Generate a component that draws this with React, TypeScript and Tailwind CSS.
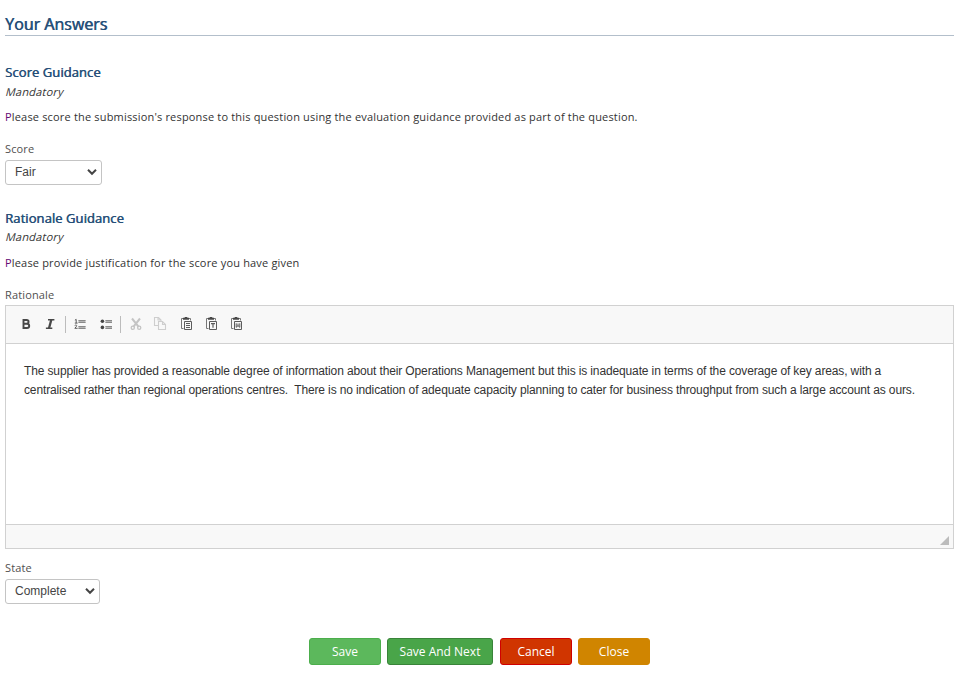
import React from "react";

const label = "text-[11px] leading-[15px] tracking-[0.15px] text-[#505050]";

function Section({ title, text, offset }: { title: string; text: string; offset: string }) {
  return (
    <section>
      <h3 className="text-[13px] leading-[18px] font-normal tracking-[0.07px] text-[#264f78] [text-shadow:0.5px_0_0_#264f78]">{title}</h3>
      <p className={`${offset} h-[18px] pl-px text-[11px] leading-[18px] tracking-[0.2px] text-[#333]`}>
        <span className="inline-block -skew-x-[14deg]">Mandatory</span>
      </p>
      <p className="text-[11px] leading-[16px] tracking-[0.177px] text-[#333]">
        <span className="text-[#650a75]">{text[0]}</span>{text.slice(1)}
      </p>
    </section>
  );
}

function Select({ value, width }: { value: string; width: string }) {
  return (
    <div className={`${width} flex h-[25px] items-center justify-between rounded-[3px] border border-[#c4c4c4] bg-white pl-[9px] pr-[4px] font-['Liberation_Sans',sans-serif] text-[12px] text-[#444]`}>
      <span className="-mt-[2px]">{value}</span>
      <svg className="-mt-px" width="10" height="8" viewBox="0 0 10 8" fill="none" stroke="#444" strokeWidth="2"><path d="M1 1.8 5 5.8 9 1.8" /></svg>
    </div>
  );
}

function Icon({ className = "", children }: { className?: string; children: React.ReactNode }) {
  return <svg className={`shrink-0 ${className}`} width="16" height="16" viewBox="0 0 16 16" fill="none" stroke="#5c5c5c">{children}</svg>;
}

function Clipboard({ children }: { children: React.ReactNode }) {
  return (
    <Icon className="ml-[9px]">
      <path d="M5 2.5H3.5v10H5.5M11 2.5h1.5V4.5" stroke="#777" />
      <path d="M5 1.8h1.7V.9h2.6v.9H11v2H5z" fill="#484848" stroke="none" />
      <path d="M6.5 5.5h7v8h-7z" fill="#f8f8f8" />
      {children}
    </Icon>
  );
}

function Toolbar() {
  return (
    <div className="flex h-[38px] items-center border-b border-[#d1d1d1] bg-[#f8f8f8] pb-px pl-[12px]">
      <Icon>
        <path d="M5.5 3v10M5 4h3.6c2.6 0 2.6 3.7 0 3.7H5M5 7.8h3.9c3.1 0 3.1 4.2 0 4.2H5" stroke="#484848" strokeWidth="1.9" />
      </Icon>
      <Icon className="ml-[8px]">
        <path d="M6 3.7h6.4M3.9 12.2h6.4" stroke="#484848" strokeWidth="1.5" />
        <path d="M9.3 3.7 7 12.2" stroke="#484848" strokeWidth="2.3" />
      </Icon>
      <i className="ml-[7px] h-[17px] w-px bg-[#bcbcbc]" />
      <Icon className="ml-[6px]">
        <path d="M2.9 4.2 4.2 3.4v3.7M2.8 7.1h2.8M2.7 9.5c1.6-1 2.7 0 1.6 1.1L2.8 12.3h2.8" strokeWidth="1" />
        <path d="M6.5 4h7v3h-7zM6.5 10h7v3h-7z" fill="#b5b5b5" stroke="none" />
        <path d="M6.5 4.5h7M6.5 6.5h7M6.5 10.5h7M6.5 12.5h7" stroke="#8a8a8a" strokeWidth="1" />
      </Icon>
      <Icon className="ml-[10px]">
        <circle cx="4.4" cy="5.3" r="1.8" fill="#444" stroke="none" />
        <circle cx="4.4" cy="11.4" r="1.8" fill="#444" stroke="none" />
        <path d="M7.5 4H14v3H7.5zM7.5 10H14v3H7.5z" fill="#b5b5b5" stroke="none" />
        <path d="M7.5 4.5H14M7.5 6.5H14M7.5 10.5H14M7.5 12.5H14" stroke="#8a8a8a" strokeWidth="1" />
      </Icon>
      <i className="ml-[6px] h-[17px] w-px bg-[#bcbcbc]" />
      <Icon className="ml-[7px]">
        <g stroke="#c4c4c4">
          <path d="m4 2.5 6.7 8.3M12 2.5 5.3 10.8" strokeWidth="2" />
          <circle cx="4.8" cy="11.8" r="1.6" strokeWidth="1.3" />
          <circle cx="11.2" cy="11.8" r="1.6" strokeWidth="1.3" />
        </g>
      </Icon>
      <Icon className="ml-[8px]">
        <g stroke="#cecece" strokeWidth="1.1">
          <path d="M6 9.5H2.5v-8h4l2.5 2.5v1M6 1.5V4h3" />
          <path d="M6.5 5.5h4l3 3v5h-7zM10.5 5.5v3h3" fill="#f8f8f8" />
        </g>
      </Icon>
      <span className="w-px" />
      <Clipboard><path d="M8 7.5h4M8 9.5h4M8 11.5h4" /></Clipboard>
      <Clipboard><path d="M8 7.6h4M10 7.6v4.2" strokeWidth="1.2" /></Clipboard>
      <Clipboard><path d="M8.2 7.3v4L10 9.7l1.8 1.6v-4M10 7.5v2.5" /></Clipboard>
    </div>
  );
}

const button = "flex h-[27px] items-center justify-center rounded-[3px] border text-[12px] text-white";

export default function App() {
  return (
    <main className="h-[673px] overflow-hidden bg-white pt-[13px] pr-[4px] pl-[5px] font-['Open_Sans',sans-serif]">
      <h2 className="h-[23px] border-b border-[#b3bfcb] text-[16px] leading-[22px] text-[#264f78] [text-shadow:0.6px_0_0_#264f78]">Your Answers</h2>
      <div className="mt-[27px]"><Section offset="mt-[2px] mb-[8px]" title="Score Guidance" text="Please score the submission's response to this question using the evaluation guidance provided as part of the question." /></div>
      <div className={`mt-[16px] ${label}`}>Score</div>
      <div className="mt-[4px]"><Select value="Fair" width="w-[97px]" /></div>
      <div className="mt-[24px]"><Section offset="mt-px mb-[9px]" title="Rationale Guidance" text="Please provide justification for the score you have given" /></div>
      <div className={`mt-[16px] ${label}`}>Rationale</div>
      <div className="mt-[3px] border border-[#d1d1d1]">
        <Toolbar />
        <div className="h-[180px] pt-[18px] pl-[18px] font-['Liberation_Sans',sans-serif] text-[12px] leading-[19px] whitespace-nowrap text-[#333]">
          <p className="tracking-[-0.131px]">The supplier has provided a reasonable degree of information about their Operations Management but this is inadequate in terms of the coverage of key areas, with a</p>
          <p className="tracking-[-0.131px]">centralised rather than regional operations centres.&nbsp; There is no indication of adequate capacity planning to cater for business throughput from such a large account as ours.</p>
        </div>
        <div className="flex h-[24px] items-end justify-end border-t border-[#d1d1d1] bg-[#f8f8f8] pr-[4px] pb-[3px]">
          <svg width="9" height="9" viewBox="0 0 9 9" fill="#bcbcbc"><path d="M9 0v9H0z" /></svg>
        </div>
      </div>
      <div className={`mt-[11px] ${label}`}>State</div>
      <div className="mt-[4px]"><Select value="Complete" width="w-[95px]" /></div>
      <div className="mt-[34px] ml-[304px] flex">
        <div className={`${button} w-[72px] border-[#4cae4c] bg-[#5cb85c]`}>Save</div>
        <div className={`${button} ml-[6px] w-[106px] border-[#398439] bg-[#49a549]`}>Save And Next</div>
        <div className={`${button} ml-[7px] w-[72px] border-[#d00000] bg-[#d03500]`}>Cancel</div>
        <div className={`${button} ml-[6px] w-[72px] border-[#d08500] bg-[#d08500]`}>Close</div>
      </div>
    </main>
  );
}
